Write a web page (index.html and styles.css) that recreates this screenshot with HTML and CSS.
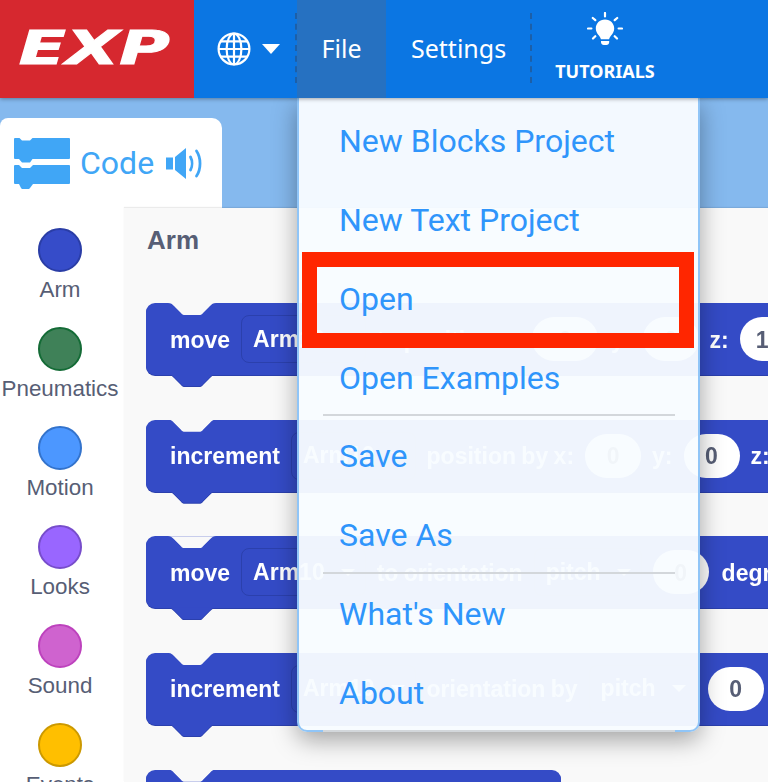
FILE: index.html
```html
<!DOCTYPE html>
<html lang="en">
<head>
  <meta charset="UTF-8">
  <meta name="viewport" content="width=device-width, initial-scale=1.0">
  <title>EXP Code</title>
  <link rel="stylesheet" href="styles.css">
</head>
<body>
  <header class="top-bar">
    <div class="logo"><span class="logo-text">EXP</span></div>
    <div class="lang-btn">
      <svg class="globe" viewBox="0 0 34 34" fill="none" stroke="#fff" stroke-width="2.2">
        <circle cx="17" cy="17" r="15.4"/>
        <ellipse cx="17" cy="17" rx="7.4" ry="15.4"/>
        <path d="M17 1.6V32.4M1.6 17H32.4M4 9.4H30M4 24.6H30"/>
      </svg>
      <span class="caret"></span>
    </div>
    <div class="nav-item active">File</div>
    <div class="nav-item settings">Settings</div>
    <div class="tutorials">
      <svg class="bulb" viewBox="0 0 36 36" fill="#fff">
        <path d="M18 7.5c-5.4 0-9.2 4-9.2 8.9 0 3 1.4 5 2.9 6.8 1.1 1.3 1.9 2.5 2.2 4h8.2c.3-1.500 1.100-2.700 2.200-4 1.500-1.800 2.900-3.800 2.900-6.800 0-4.900-3.800-8.900-9.200-8.900z"/>
        <path d="M14 29h8.200v1.200c0 1.500-1.200 2.800-2.800 2.800h-2.600c-1.500 0-2.800-1.300-2.800-2.800z"/>
        <path d="M18 1v3.400M5.800 6l2.500 2.200M30.200 6l-2.500 2.200M1 16.500h3.400M31.600 16.500H35M6 26.500l2.300-2.300M30 26.500l-2.300-2.300" stroke="#fff" stroke-width="2.200" stroke-linecap="round"/>
      </svg>
      <span class="tutorials-label">TUTORIALS</span>
    </div>
  </header>

  <div class="file-menu">
    <div class="menu-item">New Blocks Project</div>
    <div class="menu-item">New Text Project</div>
    <div class="menu-item">Open<span class="red-box"></span></div>
    <div class="menu-item">Open Examples</div>
    <div class="menu-divider"></div>
    <div class="menu-item">Save</div>
    <div class="menu-item">Save As</div>
    <div class="menu-divider"></div>
    <div class="menu-item">What's New</div>
    <div class="menu-item">About</div>
    <div class="menu-divider"></div>
  </div>

  <div class="tab-strip">
    <div class="code-tab">
      <svg class="code-icon" viewBox="0 0 56 51" fill="#40a6f6">
        <path d="M1 0h4.500l2.500 2.500h8L18.500 0H55a1 1 0 0 1 1 1v19a1 1 0 0 1-1 1H18.500l-2.500 3.500H8L5 21H1a1 1 0 0 1-1-1V1a1 1 0 0 1 1-1z"/>
        <path d="M1 27h4l3 3h8l3-3h36a1 1 0 0 1 1 1v17a1 1 0 0 1-1 1H19l-3 4c-.5.6-1 1-2 1H9c-1 0-1.500-.4-2-1l-2-4H1a1 1 0 0 1-1-1V28a1 1 0 0 1 1-1z"/>
      </svg>
      <span class="code-label">Code</span>
      <svg class="speaker" viewBox="0 0 37 31" fill="none" stroke="#40a6f6" stroke-width="2.800" stroke-linecap="round">
        <path d="M0 9.500h7V21.500H0zM9 9 20 0v31L9 22z" fill="#40a6f6" stroke="none"/>
        <path d="M24.500 9c2 3.700 2 9.300 0 13M30.500 3c4.700 6.800 4.700 18.200 0 25"/>
      </svg>
    </div>
  </div>

  <div class="workspace">
    <aside class="categories">
      <div class="cat"><span class="dot dot-arm"></span>Arm</div>
      <div class="cat"><span class="dot dot-pneu"></span>Pneumatics</div>
      <div class="cat"><span class="dot dot-motion"></span>Motion</div>
      <div class="cat"><span class="dot dot-looks"></span>Looks</div>
      <div class="cat"><span class="dot dot-sound"></span>Sound</div>
      <div class="cat"><span class="dot dot-events"></span>Events</div>
    </aside>

    <main class="flyout">
      <h2 class="flyout-title">Arm</h2>

      <div class="block">
        <span>move</span>
        <span class="field">Arm10<i class="arrow"></i></span>
        <span>to position x:</span>
        <span class="pill wide">0</span>
        <span>y:</span>
        <span class="pill">0</span>
        <span>z:</span>
        <span class="pill">100</span>
      </div>

      <div class="block">
        <span>increment</span>
        <span class="field">Arm10<i class="arrow"></i></span>
        <span>position by x:</span>
        <span class="pill">0</span>
        <span>y:</span>
        <span class="pill">0</span>
        <span>z:</span>
        <span class="pill">0</span>
      </div>

      <div class="block">
        <span>move</span>
        <span class="field">Arm10<i class="arrow"></i></span>
        <span>to orientation</span>
        <span class="field">pitch<i class="arrow"></i></span>
        <span class="pill">0</span>
        <span class="after-pill">degrees</span>
      </div>

      <div class="block">
        <span>increment</span>
        <span class="field">Arm10<i class="arrow"></i></span>
        <span>orientation by</span>
        <span class="field">pitch<i class="arrow"></i></span>
        <span class="pill">0</span>
        <span class="after-pill">degrees</span>
      </div>

      <div class="block short"></div>
    </main>
  </div>
</body>
</html>
```

FILE: styles.css
```css
html, body {
  height: 100%;
}

body {
  margin: 0;
  overflow: hidden;
  background-color: #85b9ee;
  font-family: 'Liberation Sans', Arial, sans-serif;
  display: flex;
  flex-direction: column;
}

/* top bar */
.top-bar {
  position: relative;
  z-index: 3;
  display: flex;
  flex: none;
  height: 98px;
  background-color: #0b76e3;
  color: #fff;
  font-family: 'Noto Sans', sans-serif;
  box-shadow: 0 1px 4px rgba(0, 0, 0, 0.35);
}

.logo {
  display: flex;
  align-items: center;
  justify-content: center;
  width: 194px;
  background-color: #d6282f;
}

.logo-text {
  margin: 0 5px 2px 0;
  font-family: 'DejaVu Sans', sans-serif;
  font-size: 46px;
  font-weight: bold;
  font-style: italic;
  line-height: 1;
  transform: scaleX(1.5);
  -webkit-text-stroke: 1px #fff;
}

.lang-btn {
  display: flex;
  align-items: center;
  width: 103px;
  box-sizing: border-box;
  padding-left: 23px;
  gap: 11px;
  position: relative;
}

.lang-btn::after,
.settings::after {
  content: "";
  position: absolute;
  top: 13px;
  bottom: 15px;
  right: 0;
  border-right: 2px dashed #1c5fa8;
}

.globe {
  width: 34px;
  height: 34px;
}

.caret {
  border-left: 9px solid transparent;
  border-right: 9px solid transparent;
  border-top: 10px solid #fff;
}

.nav-item {
  display: flex;
  align-items: center;
  box-sizing: border-box;
  padding-bottom: 2px;
  font-size: 25px;
}

.nav-item.active {
  width: 89px;
  justify-content: center;
  background-color: #2671c1;
}

.settings {
  position: relative;
  width: 146px;
  padding-left: 25px;
}

.tutorials {
  display: flex;
  flex-direction: column;
  align-items: center;
  width: 100px;
  margin-left: 23px;
  padding-top: 12px;
}

.bulb {
  width: 36px;
  height: 36px;
}

.tutorials-label {
  margin-top: 11px;
  font-size: 18px;
  font-weight: bold;
  line-height: 24px;
  white-space: nowrap;
}

/* file menu */
.file-menu {
  position: absolute;
  z-index: 2;
  top: 98px;
  left: 297px;
  width: 403px;
  height: 634px;
  box-sizing: border-box;
  padding-top: 4px;
  background-color: rgba(248, 252, 255, 0.955);
  border: 2px solid #90c5f7;
  border-top: none;
  border-radius: 0 0 10px 10px;
  box-shadow: 0 8px 24px rgba(0, 0, 0, 0.35);
  font-family: Roboto, sans-serif;
  font-size: 32px;
  color: #2f95fb;
}

.menu-item {
  position: relative;
  height: 78.85px;
  line-height: 78px;
  padding-left: 40px;
}

.menu-divider {
  height: 2px;
  margin: -3px 23px 1px 24px;
  background-color: #d3d7db;
}

.red-box {
  position: absolute;
  top: -8px;
  left: 3px;
  right: 4px;
  height: 66px;
  border: 15px solid #ff2600;
}

/* tabs */
.tab-strip {
  flex: none;
  height: 90px;
  padding-top: 20px;
}

.code-tab {
  display: flex;
  align-items: center;
  width: 222px;
  height: 90px;
  box-sizing: border-box;
  padding: 0 0 0 14px;
  background-color: #fff;
  border-radius: 8px 10px 0 0;
}

.code-icon {
  width: 56px;
  height: 51px;
}

.code-label {
  margin-left: 10px;
  font-family: Roboto, sans-serif;
  font-size: 32px;
  color: #40a6f6;
}

.speaker {
  width: 37px;
  height: 31px;
  margin-left: 12px;
}

/* main area */
.workspace {
  display: flex;
  flex: 1;
  min-height: 0;
}

.categories {
  flex: none;
  width: 120px;
  padding: 20px 4px 0 0;
  background-color: #fff;
}

.cat {
  display: flex;
  flex-direction: column;
  align-items: center;
  height: 99px;
  font-size: 22.4px;
  line-height: 36px;
  color: #575e75;
}

.dot {
  flex: none;
  width: 44px;
  height: 44px;
  box-sizing: border-box;
  border-radius: 50%;
  border: 2px solid;
}

.dot-arm { background-color: #364cc9; border-color: #2a3da6; }
.dot-pneu { background-color: #3f8158; border-color: #146b36; }
.dot-motion { background-color: #4c97ff; border-color: #3373cc; }
.dot-looks { background-color: #9966ff; border-color: #774dcb; }
.dot-sound { background-color: #cf63cf; border-color: #bd42bd; }
.dot-events { background-color: #ffbf00; border-color: #cc9900; }

.flyout {
  flex: 1;
  min-width: 0;
  padding-left: 22px;
  background-color: #f9f9f9;
  box-shadow: 0 -1px 1px rgba(0, 0, 0, 0.08);
}

.flyout-title {
  margin: 0;
  padding: 16px 0 0 1px;
  height: 79px;
  font-size: 26px;
  line-height: 32px;
  font-weight: bold;
  color: #575e75;
}

/* scratch style blocks */
.block {
  position: relative;
  display: flex;
  align-items: center;
  gap: 11px;
  width: max-content;
  height: 72px;
  box-sizing: border-box;
  margin-bottom: 44.67px;
  padding: 2px 24px 0;
  background-color: #344bc6;
  border-radius: 9px;
  font-size: 23px;
  font-weight: bold;
  word-spacing: -1px;
  color: #fff;
  white-space: nowrap;
  filter: drop-shadow(0 1px 0 #2b40ad);
}

.block.short {
  width: 415px;
}

.block::before,
.block::after {
  content: "";
  position: absolute;
  left: 22px;
  width: 48px;
  height: 12px;
  clip-path: path('M0 0 C3 0 4 1 6 3 L13 10 C14 11.5 15 12 17 12 H31 C33 12 34 11.5 35 10 L42 3 C44 1 45 0 48 0 Z');
}

.block::before {
  top: 0;
  background-color: #f9f9f9;
}

.block::after {
  bottom: -11px;
  background-color: #344bc6;
}

.field {
  display: flex;
  align-items: center;
  height: 48px;
  box-sizing: border-box;
  margin-top: -2px;
  padding: 0 10px 0 11px;
  border: 1px solid #2b40ad;
  border-radius: 8px;
}

.arrow {
  margin-left: 16px;
  border-left: 7px solid transparent;
  border-right: 7px solid transparent;
  border-top: 7px solid #fff;
}

.pill {
  display: flex;
  align-items: center;
  justify-content: center;
  min-width: 56px;
  height: 44px;
  box-sizing: border-box;
  margin-top: -2px;
  padding: 2px 16px 0;
  background-color: #fff;
  border-radius: 22px;
  color: #575e75;
}

.pill.wide {
  min-width: 66px;
  margin: -2px 2px 0 2px;
}

.after-pill {
  margin-left: 2px;
}
```
